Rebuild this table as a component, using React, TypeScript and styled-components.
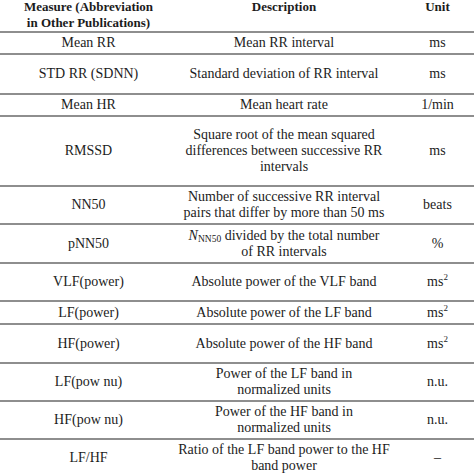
import React from 'react';
import styled, { createGlobalStyle } from 'styled-components';

const GlobalStyle = createGlobalStyle`
  html, body {
    margin: 0;
    padding: 0;
    background: #ffffff;
  }
  body {
    font-family: "Liberation Serif", "DejaVu Serif", serif;
    color: #1c1c1c;
  }
`;

interface measureProps {
  measure: React.ReactNode,
  description: React.ReactNode,
  unit: React.ReactNode,
  height: number,
  last?: boolean
}

const Table = styled.div`
  width: 474px;
  height: 474px;
  overflow: hidden;
  display: flex;
  flex-direction: column;
  font-family: "Liberation Serif", "DejaVu Serif", serif;
`;

const Row = styled.div<{ $height: number, $last?: boolean }>`
  display: grid;
  grid-template-columns: 177px 214px 83px;
  align-items: center;
  box-sizing: border-box;
  height: ${props => props.$height}px;
  flex-shrink: 0;
  border-bottom: ${props => props.$last ? 'none' : '2px solid #8e8e8e'};
`;

const HeaderRow = styled(Row)`
  align-items: start;
  font-weight: bold;
`;

const Cell = styled.div`
  text-align: center;
  font-size: 14px;
  line-height: 16px;
  white-space: nowrap;
`;

const UnitCell = styled(Cell)`
  padding-left: 10px;
`;

const HeaderCell = styled(Cell)`
  font-size: 13px;
  margin-top: -1px;
`;

const HeaderUnit = styled(HeaderCell)`
  padding-left: 10px;
`;

const Sup = styled.sup`
  font-size: 9px;
  line-height: 0;
  vertical-align: 6px;
`;

const Sub = styled.sub`
  font-size: 9.5px;
  line-height: 0;
  vertical-align: -2px;
`;

const Italic = styled.i`
  font-style: italic;
`;

const msSquared = <>ms<Sup>2</Sup></>;

const rows: Array<measureProps> = [
  { measure: 'Mean RR', description: 'Mean RR interval', unit: 'ms', height: 22 },
  { measure: 'STD RR (SDNN)', description: 'Standard deviation of RR interval', unit: 'ms', height: 40 },
  { measure: 'Mean HR', description: 'Mean heart rate', unit: '1/min', height: 22 },
  {
    measure: 'RMSSD',
    description: <>Square root of the mean squared<br />differences between successive RR<br />intervals</>,
    unit: 'ms',
    height: 70
  },
  {
    measure: 'NN50',
    description: <>Number of successive RR interval<br />pairs that differ by more than 50 ms</>,
    unit: 'beats',
    height: 38
  },
  {
    measure: 'pNN50',
    description: <><Italic>N</Italic><Sub>NN50</Sub> divided by the total number<br />of RR intervals</>,
    unit: '%',
    height: 39
  },
  { measure: 'VLF(power)', description: 'Absolute power of the VLF band', unit: msSquared, height: 38 },
  { measure: 'LF(power)', description: 'Absolute power of the LF band', unit: msSquared, height: 23 },
  { measure: 'HF(power)', description: 'Absolute power of the HF band', unit: msSquared, height: 39 },
  {
    measure: 'LF(pow nu)',
    description: <>Power of the LF band in<br />normalized units</>,
    unit: 'n.u.',
    height: 38
  },
  {
    measure: 'HF(pow nu)',
    description: <>Power of the HF band in<br />normalized units</>,
    unit: 'n.u.',
    height: 38
  },
  {
    measure: 'LF/HF',
    description: <>Ratio of the LF band power to the HF<br />band power</>,
    unit: '–',
    height: 36,
    last: true
  }
];

const App = () => (
  <>
    <GlobalStyle />
    <Table>
      <HeaderRow $height={33}>
        <HeaderCell>Measure (Abbreviation<br />in Other Publications)</HeaderCell>
        <HeaderCell>Description</HeaderCell>
        <HeaderUnit>Unit</HeaderUnit>
      </HeaderRow>
      {rows.map((item, k) => (
        <Row key={k} $height={item.height} $last={item.last}>
          <Cell>{item.measure}</Cell>
          <Cell>{item.description}</Cell>
          <UnitCell>{item.unit}</UnitCell>
        </Row>
      ))}
    </Table>
  </>
);

export default App;
